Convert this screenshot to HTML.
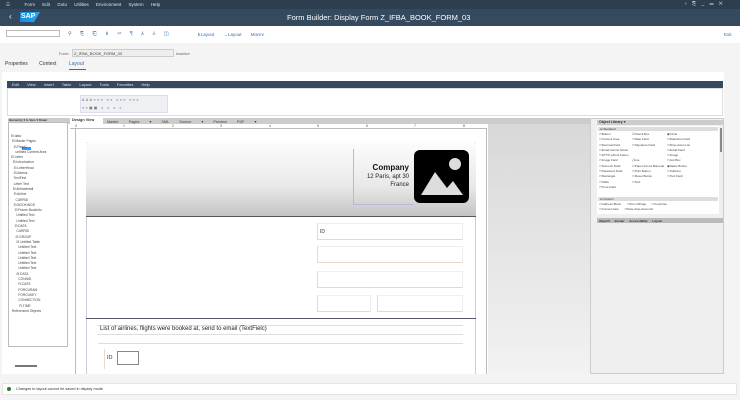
<!DOCTYPE html>
<html><head><meta charset="utf-8"><style>
*{margin:0;padding:0;box-sizing:border-box}
body{width:740px;height:400px;overflow:hidden;background:#f4f4f4;font-family:"Liberation Sans",sans-serif;position:relative}
.a{position:absolute}
.t{font-size:4px;color:#333;white-space:nowrap}
</style></head><body>
<div class="a" style="left:0;top:0;width:740px;height:9px;background:#2c3e50"></div>
<div class="a t" style="left:6px;top:2px;color:#dfe6ee;font-size:4.5px;word-spacing:6px">☰ &nbsp;Form Edit Goto Utilities Environment System Help</div>
<div class="a t" style="left:685px;top:1px;color:#dfe6ee;font-size:5px;word-spacing:4px">‹ ⎘ _ ▭ ✕</div>
<div class="a" style="left:0;top:9px;width:740px;height:17px;background:#354a5f"></div>
<div class="a t" style="left:9px;top:12px;color:#fff;font-size:8px">‹</div>
<div class="a" style="left:20px;top:12px;width:20px;height:10px;background:linear-gradient(90deg,#1a8ad8,#2aa8f0);clip-path:polygon(0 0,100% 0,70% 100%,0 100%)"></div>
<div class="a t" style="left:21px;top:13px;color:#fff;font-size:7px;font-weight:bold">SAP</div>
<div class="a t" style="left:287px;top:13px;color:#fff;font-size:7.5px">Form Builder: Display Form Z_IFBA_BOOK_FORM_03</div>
<div class="a" style="left:0;top:26px;width:740px;height:17px;background:#fff"></div>
<div class="a" style="left:6px;top:30px;width:54px;height:7px;border:1px solid #bbb;background:#fff"></div>
<div class="a t" style="left:68px;top:31px;color:#3a6ea5;font-size:5px;word-spacing:7px">⚲ ⎘ ⎗ ⇟ ✂ ¶ ⅄ ⅄ ◫</div>
<div class="a t" style="left:197px;top:32px;color:#3a6ea5;font-size:4.5px;word-spacing:8px">⇟Layout →Layout More∨</div>
<div class="a t" style="left:724px;top:32px;color:#3a6ea5;font-size:4.5px">Exit</div>
<div class="a t" style="left:59px;top:51px;color:#666">Form:</div>
<div class="a" style="left:72px;top:49px;width:102px;height:8px;background:#eee;border:1px solid #ccc"></div>
<div class="a t" style="left:74px;top:51px;color:#444">Z_IFBA_BOOK_FORM_03</div>
<div class="a t" style="left:176px;top:51px;color:#666">Inactive</div>
<div class="a t" style="left:5px;top:61px;font-size:5px;color:#333;word-spacing:10px">Properties Context</div>
<div class="a t" style="left:69px;top:61px;font-size:5px;color:#3a6ea5">Layout</div>
<div class="a" style="left:69px;top:69px;width:17px;height:1px;background:#3a6ea5"></div>
<div class="a" style="left:2px;top:72px;width:722px;height:302px;background:#fff"></div>
<div class="a" style="left:7px;top:81px;width:716px;height:7px;background:#354a5f"></div>
<div class="a t" style="left:12px;top:82px;color:#dfe6ee;font-size:4px;word-spacing:7px">Edit View Insert Table Layout Tools Favorites Help</div>
<div class="a" style="left:7px;top:88px;width:716px;height:28px;background:#fff;border:1px solid #ddd"></div>
<div class="a" style="left:80px;top:95px;width:88px;height:18px;background:#eef0f3;border:1px solid #dde"></div>
<div class="a t" style="left:82px;top:98px;color:#556;font-size:3.5px;letter-spacing:1.5px">AAA≡≡≡ ≡≡ ≡≡≡ ≡≡≡</div>
<div class="a t" style="left:82px;top:106px;color:#556;font-size:3.5px;letter-spacing:1.5px">≡≡▦▦ ≡ ≡ ≡ ≡</div>
<div class="a" style="left:68px;top:118px;width:528px;height:6px;background:#ccc"></div>
<div class="a" style="left:70px;top:117px;width:33px;height:7px;background:#fff"></div>
<div class="a t" style="left:72px;top:118px;font-weight:bold;font-size:3.8px">Design View</div>
<div class="a t" style="left:107px;top:119px;font-size:3.8px;color:#444;word-spacing:9px">Master&nbsp;Pages ▾ XML&nbsp;Source ▾ Preview&nbsp;PDF ▾</div>
<div class="a" style="left:8px;top:118px;width:60px;height:4px;background:#ccc"></div>
<div class="a t" style="left:9px;top:118px;font-size:3px;font-weight:bold">Hierarchy ▾ Is Vars ▾ Drawi</div>
<div class="a" style="left:8px;top:122px;width:60px;height:225px;background:#fff;border:1px solid #bbb"></div>
<div class="a" style="left:22px;top:147px;width:9px;height:3px;background:#3399ff"></div>
<div class="a t" style="left:10px;top:134px;font-size:3.3px;color:#444;line-height:5.3px">
&nbsp;⊟ data<br>&nbsp;&nbsp;⊟ Master Pages<br>&nbsp;&nbsp;&nbsp;&nbsp;⊟ Page1<br>&nbsp;&nbsp;&nbsp;&nbsp;&nbsp;&nbsp;untitled Content Area<br>&nbsp;⊟ Letter<br>&nbsp;&nbsp;&nbsp;⊟ Introduction<br>&nbsp;&nbsp;&nbsp;&nbsp;⊟ LetterHead<br>&nbsp;&nbsp;&nbsp;&nbsp;⊟ Adress<br>&nbsp;&nbsp;&nbsp;&nbsp;TextFirst<br>&nbsp;&nbsp;&nbsp;&nbsp;Letter Text<br>&nbsp;&nbsp;&nbsp;⊟ Airlinedetail<br>&nbsp;&nbsp;&nbsp;&nbsp;⊟ Airline<br>&nbsp;&nbsp;&nbsp;&nbsp;&nbsp;&nbsp;CARRID<br>&nbsp;&nbsp;&nbsp;&nbsp;⊟ BOOKINGS<br>&nbsp;&nbsp;&nbsp;&nbsp;&nbsp;⊟ Frame Bookinfo<br>&nbsp;&nbsp;&nbsp;&nbsp;&nbsp;&nbsp;&nbsp;Untitled Text<br>&nbsp;&nbsp;&nbsp;&nbsp;&nbsp;&nbsp;&nbsp;Untitled Text<br>&nbsp;&nbsp;&nbsp;&nbsp;&nbsp;⊟ DATA<br>&nbsp;&nbsp;&nbsp;&nbsp;&nbsp;&nbsp;&nbsp;CARRID<br>&nbsp;&nbsp;&nbsp;&nbsp;&nbsp;&nbsp;⊟ GROUP<br>&nbsp;&nbsp;&nbsp;&nbsp;&nbsp;&nbsp;&nbsp;⊟ Untitled Table<br>&nbsp;&nbsp;&nbsp;&nbsp;&nbsp;&nbsp;&nbsp;&nbsp;&nbsp;Untitled Text<br>&nbsp;&nbsp;&nbsp;&nbsp;&nbsp;&nbsp;&nbsp;&nbsp;&nbsp;Untitled Text<br>&nbsp;&nbsp;&nbsp;&nbsp;&nbsp;&nbsp;&nbsp;&nbsp;&nbsp;Untitled Text<br>&nbsp;&nbsp;&nbsp;&nbsp;&nbsp;&nbsp;&nbsp;&nbsp;&nbsp;Untitled Text<br>&nbsp;&nbsp;&nbsp;&nbsp;&nbsp;&nbsp;&nbsp;&nbsp;&nbsp;Untitled Text<br>&nbsp;&nbsp;&nbsp;&nbsp;&nbsp;&nbsp;&nbsp;⊟ DATA<br>&nbsp;&nbsp;&nbsp;&nbsp;&nbsp;&nbsp;&nbsp;&nbsp;&nbsp;CONNID<br>&nbsp;&nbsp;&nbsp;&nbsp;&nbsp;&nbsp;&nbsp;&nbsp;&nbsp;FLDATE<br>&nbsp;&nbsp;&nbsp;&nbsp;&nbsp;&nbsp;&nbsp;&nbsp;&nbsp;FORCURAM<br>&nbsp;&nbsp;&nbsp;&nbsp;&nbsp;&nbsp;&nbsp;&nbsp;&nbsp;FORCUKEY<br>&nbsp;&nbsp;&nbsp;&nbsp;&nbsp;&nbsp;&nbsp;&nbsp;&nbsp;CONNECTION<br>&nbsp;&nbsp;&nbsp;&nbsp;&nbsp;&nbsp;&nbsp;&nbsp;&nbsp;&nbsp;FLTIME<br>&nbsp;&nbsp;Referenced Objects</div>
<div class="a" style="left:15px;top:365px;width:22px;height:2px;background:#777"></div>
<div class="a" style="left:70px;top:124px;width:417px;height:5px;background:#fff;border-bottom:1px solid #bbb"></div>
<div class="a t" style="left:75px;top:124px;font-size:3.5px;color:#555">0</div>
<div class="a t" style="left:123px;top:124px;font-size:3.5px;color:#555">1</div>
<div class="a t" style="left:172px;top:124px;font-size:3.5px;color:#555">2</div>
<div class="a t" style="left:220px;top:124px;font-size:3.5px;color:#555">3</div>
<div class="a t" style="left:269px;top:124px;font-size:3.5px;color:#555">4</div>
<div class="a t" style="left:317px;top:124px;font-size:3.5px;color:#555">5</div>
<div class="a t" style="left:366px;top:124px;font-size:3.5px;color:#555">6</div>
<div class="a t" style="left:414px;top:124px;font-size:3.5px;color:#555">7</div>
<div class="a t" style="left:463px;top:124px;font-size:3.5px;color:#555">8</div>
<div class="a" style="left:70px;top:129px;width:6px;height:245px;background:#fff;border-right:1px solid #bbb"></div>
<div class="a" style="left:77px;top:129px;width:410px;height:245px;background:#fff;border-right:1px solid #bbb"></div>
<div class="a" style="left:86px;top:142px;width:1px;height:232px;background:#ccd"></div>
<div class="a" style="left:475px;top:142px;width:1px;height:232px;background:#ccd"></div>
<div class="a" style="left:86px;top:143px;width:390px;height:73px;background:linear-gradient(#fcfcfc,#e8e8e8 60%,#c4c4c4)"></div>
<div class="a" style="left:86px;top:216px;width:390px;height:1px;background:#555"></div>
<div class="a" style="left:353px;top:149px;width:61px;height:56px;border-left:1px solid #b8b8d8;border-bottom:1px solid #b8b8d8"></div>
<div class="a" style="left:350px;top:163px;width:59px;text-align:right;font-size:8px;font-weight:bold;color:#111">Company</div>
<div class="a" style="left:350px;top:173px;width:59px;text-align:right;font-size:6px;color:#222;line-height:8px">12 Paris, apt 30<br>France</div>
<svg class="a" style="left:414px;top:150px" width="55" height="53" viewBox="0 0 55 53"><rect x="0" y="0" width="55" height="53" rx="6" fill="#000"/><circle cx="41" cy="14" r="6" fill="#ddd"/><path d="M7 45 L21 22 L33 38 L39 31 L49 45 Z" fill="#ddd"/></svg>
<div class="a" style="left:317px;top:223px;width:146px;height:17px;border:1px solid #eee;border-left-color:#e5dcc0;border-bottom-color:#e5dcc0"></div>
<div class="a t" style="left:320px;top:229px;font-size:5px">ID</div>
<div class="a" style="left:317px;top:246px;width:146px;height:17px;border:1px solid #eee;border-left-color:#e5dcc0;border-bottom-color:#e5dcc0"></div>
<div class="a" style="left:317px;top:271px;width:146px;height:17px;border:1px solid #eee;border-left-color:#e5dcc0;border-bottom-color:#e5dcc0"></div>
<div class="a" style="left:317px;top:295px;width:54px;height:17px;border:1px solid #eee;border-left-color:#e5dcc0;border-bottom-color:#e5dcc0"></div>
<div class="a" style="left:377px;top:295px;width:86px;height:17px;border:1px solid #eee;border-left-color:#e5dcc0;border-bottom-color:#e5dcc0"></div>
<div class="a" style="left:86px;top:318px;width:390px;height:1px;background:#556"></div>
<div class="a" style="left:97px;top:325px;width:366px;height:10px;border-top:1px solid #ddd;border-bottom:1px solid #ddd"></div>
<div class="a t" style="left:100px;top:326px;font-size:6px;color:#222">List of airlines, flights were booked at, send to email (TextFielc)</div>
<div class="a" style="left:98px;top:343px;width:365px;height:1px;background:#ddd"></div>
<div class="a" style="left:104px;top:349px;width:38px;height:20px;border-left:1px solid #e5dcc0"></div>
<div class="a t" style="left:107px;top:355px;font-size:5.5px">ID</div>
<div class="a" style="left:117px;top:351px;width:22px;height:14px;border:1px solid #888"></div>
<div class="a" style="left:488px;top:124px;width:102px;height:250px;background:linear-gradient(#d8d8d8,#f2f2f2)"></div>
<div class="a" style="left:590px;top:118px;width:134px;height:256px;background:#efefef;border:1px solid #ccc"></div>
<div class="a" style="left:597px;top:120px;width:126px;height:5px;background:#ccc"></div>
<div class="a t" style="left:599px;top:120px;font-size:3.5px;font-weight:bold">Object Library ▾</div>
<div class="a" style="left:597px;top:126px;width:122px;height:88px;background:#fff"></div>
<div class="a" style="left:598px;top:127px;width:120px;height:4px;background:#ddd"></div>
<div class="a t" style="left:600px;top:127px;font-size:3px">⊟ Standard</div>
<div class="a t" style="left:599px;top:132px;font-size:3px;color:#444;line-height:5.3px">▭Button<br>▭Content Area<br>▭Decimal Field<br>▭Email submit button<br>▭HTTP submit button<br>▭Image Field<br>▭Numeric Field<br>▭Password Field<br>▭Rectangle<br>▭Table<br>▭Time Field</div>
<div class="a t" style="left:632px;top:132px;font-size:3px;color:#444;line-height:5.3px">☑Check Box<br>▭Date Field<br>▭Signature Field<br><br><br>╱Line<br>▭Paper Forms Barcode<br>▭Print Button<br>▭Reset Button<br>▭Text</div>
<div class="a t" style="left:667px;top:132px;font-size:3px;color:#444;line-height:5.3px">◉Circle<br>▭Date/time Field<br>▭Drop-down List<br>▭Email Field<br>▭Image<br>▭List Box<br>◉Radio Button<br>▭Subform<br>▭Text Field</div>
<div class="a" style="left:598px;top:197px;width:120px;height:4px;background:#ddd"></div>
<div class="a t" style="left:600px;top:197px;font-size:3px">⊟ Custom</div>
<div class="a t" style="left:599px;top:202px;font-size:3px;color:#444;line-height:5px">▭Address Block &nbsp;&nbsp;&nbsp;&nbsp;&nbsp;&nbsp;▭Form Bridge &nbsp;&nbsp;&nbsp;&nbsp;&nbsp;▭Countries<br>▭Current date &nbsp;&nbsp;&nbsp;&nbsp;&nbsp;&nbsp;▭Date drop-down list</div>
<div class="a" style="left:720px;top:128px;width:2px;height:24px;background:#888"></div>
<div class="a" style="left:597px;top:218px;width:126px;height:5px;background:#bbb"></div>
<div class="a t" style="left:599px;top:219px;font-size:3px;font-weight:bold;word-spacing:4px">Object▾ Border Accessibility Layout</div>
<div class="a" style="left:2px;top:383px;width:735px;height:12px;background:#fff;border:1px solid #e4e4e4"></div>
<div class="a" style="left:7px;top:387px;width:4px;height:4px;border-radius:50%;background:#2b7d2b"></div>
<div class="a t" style="left:16px;top:387px;font-size:3.8px;color:#333">Changes to layout cannot be saved in display mode</div>
</body></html>
